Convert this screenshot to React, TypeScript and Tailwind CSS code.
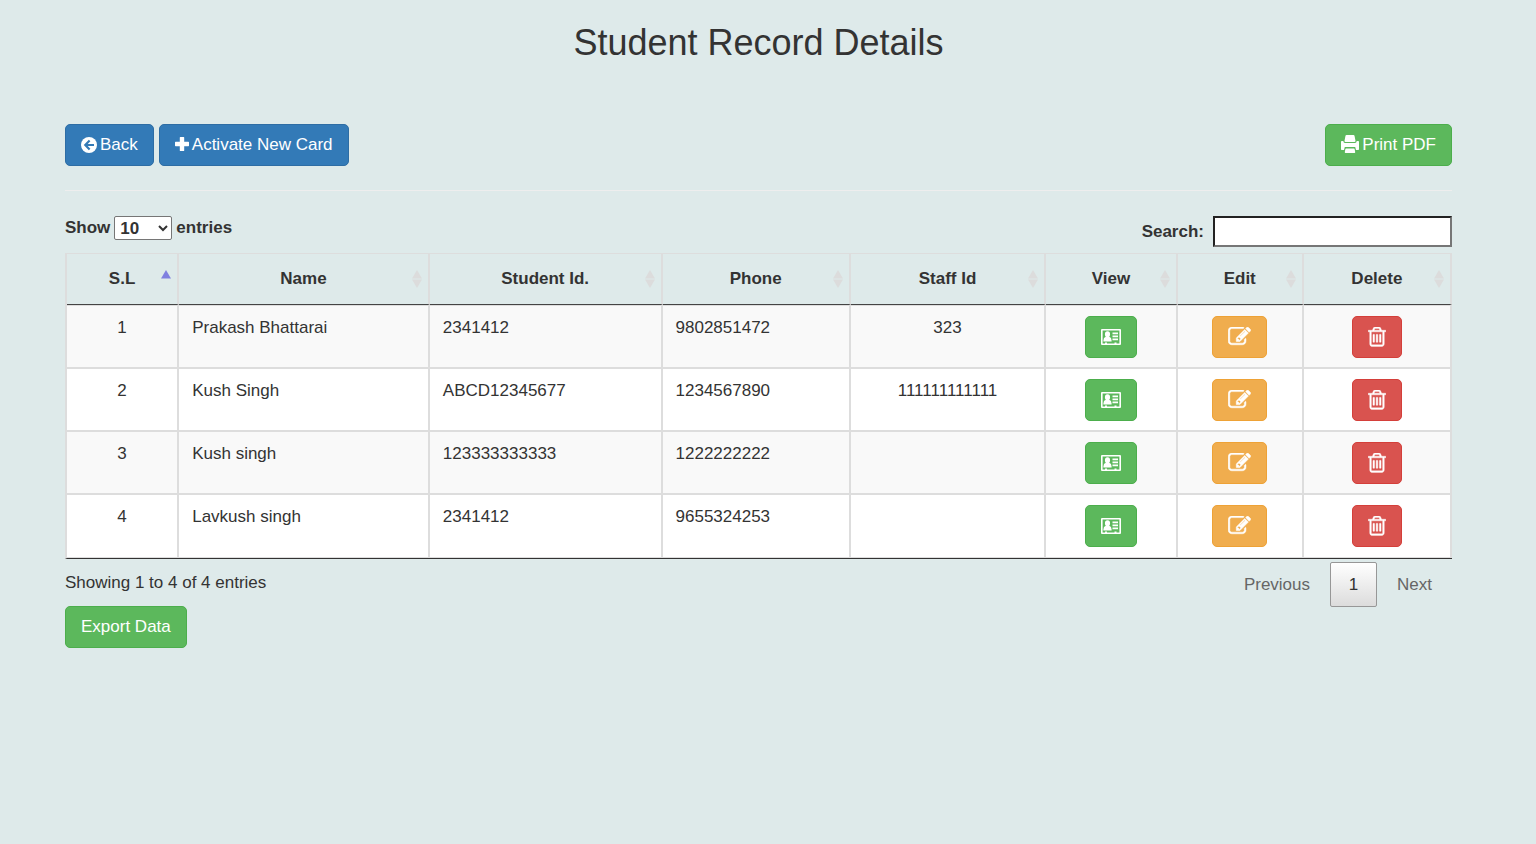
import { FC, ReactNode, SVGProps, useState } from 'react'

type Student = {
  name: string
  studentId: string
  phone: string
  staffId: string
}

const students: Student[] = [
  { name: 'Prakash Bhattarai', studentId: '2341412', phone: '9802851472', staffId: '323' },
  { name: 'Kush Singh', studentId: 'ABCD12345677', phone: '1234567890', staffId: '111111111111' },
  { name: 'Kush singh', studentId: '123333333333', phone: '1222222222', staffId: '' },
  { name: 'Lavkush singh', studentId: '2341412', phone: '9655324253', staffId: '' },
]

const columns = [
  { label: 'S.L', width: 'w-[8.1%]' },
  { label: 'Name', width: 'w-[18.1%]' },
  { label: 'Student Id.', width: 'w-[16.8%]' },
  { label: 'Phone', width: 'w-[13.6%]' },
  { label: 'Staff Id', width: 'w-[14.1%]' },
  { label: 'View', width: 'w-[9.5%]' },
  { label: 'Edit', width: 'w-[9.1%]' },
  { label: 'Delete', width: 'w-[10.7%]' },
]

const BackIcon: FC<SVGProps<SVGSVGElement>> = (props) => (
  <svg viewBox="0 0 16 16" aria-hidden="true" {...props}>
    <circle cx="8" cy="8" r="8" fill="currentColor" />
    <path d="M8.600 3.600L4.300 8l4.300 4.400M4.500 8h8.500" fill="none" stroke="#337ab7" strokeWidth="2.200" />
  </svg>
)

const PlusIcon: FC<SVGProps<SVGSVGElement>> = (props) => (
  <svg viewBox="0 0 14 16" fill="currentColor" aria-hidden="true" {...props}>
    <path d="M5.400 0h3.200q.6 0 .6.6v4.200h4.200q.6 0 .6.6v3.200q0 .6-.6.6H9.200v4.200q0 .6-.6.6H5.400q-.6 0-.6-.6V9.200H.6Q0 9.200 0 8.600V5.400q0-.6.6-.6h4.200V.6q0-.6.6-.6z" />
  </svg>
)

const PrintIcon: FC<SVGProps<SVGSVGElement>> = (props) => (
  <svg viewBox="0 0 18 21" fill="currentColor" aria-hidden="true" {...props}>
    <path d="M5.500 0h7q.8 0 1 .8l1 5q.1 1.200-1 1.200h-9q-1.100 0-1-1.200l1-5q.2-.8 1-.8z" />
    <path d="M.8 6h1.500q.2 2 1.700 2h10q1.500 0 1.700-2h1.500q.8 0 .8.800v7.400q0 .8-.8.800H15l-.8-3H3.800L3 15H.8q-.8 0-.8-.8V6.800Q0 6 .8 6z" />
    <path d="M5 13.500h8q.5 0 .6.500l.6 3q.1 1-.7 1h-9q-.8 0-.7-1l.6-3q.1-.5.6-.5z" />
  </svg>
)

const CardIcon: FC<SVGProps<SVGSVGElement>> = (props) => (
  <svg viewBox="0 0 20 17" fill="currentColor" aria-hidden="true" {...props}>
    <path
      fillRule="evenodd"
      d="M1 0h18q1 0 1 1v14q0 1-1 1H1q-1 0-1-1V1q0-1 1-1zm.600 1.600v12.800h2.400v-.9h2v.9h7.500v-.9h2v.9h2.900V1.600z"
    />
    <path d="M6.500 2.200q2.600 0 2.600 3 0 1.600-.9 2.600 2.400.8 2.400 3.700v1H2.400v-1q0-2.900 2.400-3.700-.9-1-.9-2.600 0-3 2.600-3zM11.500 3.500H17v1.700h-5.500zM11.500 6.500H17v1.700h-5.500zM11.500 9.500H17v1.700h-5.500z" />
  </svg>
)

const EditIcon: FC<SVGProps<SVGSVGElement>> = (props) => (
  <svg
    viewBox="0 128 1792 1664"
    fill="currentColor"
    stroke="currentColor"
    strokeWidth="40"
    aria-hidden="true"
    {...props}
  >
    <path d="M888 1184l116-116-152-152-116 116v56h96v96h56zm440-720q-16-16-33 1l-350 350q-17 17-1 33t33-1l350-350q17-17 1-33zm80 594v190q0 119-84.5 203.5t-203.5 84.5h-832q-119 0-203.5-84.5t-84.5-203.5v-832q0-119 84.5-203.5t203.5-84.5h832q63 0 117 25 15 7 18 23 3 17-9 29l-49 49q-14 14-32 8-23-6-45-6h-832q-66 0-113 47t-47 113v832q0 66 47 113t113 47h832q66 0 113-47t47-113v-126q0-13 9-22l64-64q15-15 35-7t20 29zm-96-738l288 288-672 672h-288v-288zm444 132l-92 92-288-288 92-92q28-28 68-28t68 28l152 152q28 28 28 68t-28 68z" />
  </svg>
)

const TrashIcon: FC<SVGProps<SVGSVGElement>> = (props) => (
  <svg
    viewBox="192 128 1408 1664"
    fill="currentColor"
    stroke="currentColor"
    strokeWidth="30"
    aria-hidden="true"
    {...props}
  >
    <path d="M704 736v576q0 14-9 23t-23 9h-64q-14 0-23-9t-9-23v-576q0-14 9-23t23-9h64q14 0 23 9t9 23zm256 0v576q0 14-9 23t-23 9h-64q-14 0-23-9t-9-23v-576q0-14 9-23t23-9h64q14 0 23 9t9 23zm256 0v576q0 14-9 23t-23 9h-64q-14 0-23-9t-9-23v-576q0-14 9-23t23-9h64q14 0 23 9t9 23zm128 724v-948h-896v948q0 22 7 40.5t14.5 27 10.5 8.5h832q3 0 10.5-8.5t14.5-27 7-40.5zm-672-1076h448l-48-117q-7-9-17-11h-317q-10 2-17 11zm928 32v64q0 14-9 23t-23 9h-96v948q0 83-47 143.5t-113 60.5h-832q-66 0-113-58.5t-47-141.5v-952h-96q-14 0-23-9t-9-23v-64q0-14 9-23t23-9h309l70-167q15-37 54-63t79-26h320q40 0 79 26t54 63l70 167h309q14 0 23 9t9 23z" />
  </svg>
)

const SortIcon: FC<{ active: boolean }> = ({ active }) => (
  <svg
    viewBox="0 0 10 18"
    className="absolute right-1.5 top-4 w-2.5 h-[18px]"
    aria-hidden="true"
  >
    <path d="M5 0l5 8.500H0z" fill={active ? '#8080e0' : '#dcdcdc'} />
    {!active && <path d="M0 9.500h10L5 18z" fill="#dcdcdc" />}
  </svg>
)

const tones = {
  primary: 'bg-[#337ab7] border-[#2e6da4]',
  success: 'bg-[#5cb85c] border-[#4cae4c]',
  warning: 'bg-[#f0ad4e] border-[#eea236]',
  danger: 'bg-[#d9534f] border-[#d43f3a]',
}

type ButtonProps = {
  tone: keyof typeof tones
  label?: string
  children: ReactNode
}

const Button: FC<ButtonProps> = ({ tone, label, children }) => (
  <button
    type="button"
    aria-label={label}
    className={`inline-flex items-center justify-center gap-[3px] h-[42px] px-[15px] rounded-[5px] border text-white align-top cursor-pointer ${tones[tone]}`}
  >
    {children}
  </button>
)

const StudentRow: FC<{ student: Student; index: number; last: boolean }> = ({
  student,
  index,
  last,
}) => {
  const cell = `border-r-2 border-[#ddd] pt-2.5 align-top leading-6 ${
    last ? 'border-b pb-2.5' : 'border-b-2 pb-[9px]'
  } ${index === 0 ? 'border-t' : ''}`

  return (
    <tr className={index % 2 === 0 ? 'bg-[#f9f9f9]' : 'bg-white'}>
      <td className={`${cell} text-center`}>{index + 1}</td>
      <td className={`${cell} px-[13px]`}>{student.name}</td>
      <td className={`${cell} px-[13px]`}>{student.studentId}</td>
      <td className={`${cell} px-[13px]`}>{student.phone}</td>
      <td className={`${cell} text-center`}>{student.staffId}</td>
      <td className={`${cell} text-center`}>
        <Button tone="success" label={`View ${student.name}`}>
          <CardIcon className="w-5 h-[17px]" />
        </Button>
      </td>
      <td className={`${cell} text-center`}>
        <Button tone="warning" label={`Edit ${student.name}`}>
          <EditIcon className="w-[23px] h-[21px]" />
        </Button>
      </td>
      <td className={`${cell} text-center`}>
        <Button tone="danger" label={`Delete ${student.name}`}>
          <TrashIcon className="w-[18px] h-[21px]" />
        </Button>
      </td>
    </tr>
  )
}

const App: FC = () => {
  const [search, setSearch] = useState('')
  const [pageSize, setPageSize] = useState('10')

  const rows = students.filter((student) =>
    Object.values(student).join(' ').toLowerCase().includes(search.toLowerCase())
  )

  return (
    <main className="min-h-screen bg-[#deeaea] pl-[65px] pr-[84px] pt-[22px] font-['Liberation_Sans',Arial,sans-serif] text-[17px] leading-[22px] text-[#333]">
      <h1 className="text-center text-[36px] leading-[42px]">Student Record Details</h1>

      <div className="flex justify-between mt-[60px] pb-6 border-b border-[#eee]">
        <div className="flex gap-[5px]">
          <Button tone="primary">
            <BackIcon className="w-4 h-4" />
            Back
          </Button>
          <Button tone="primary">
            <PlusIcon className="w-3.5 h-4" />
            Activate New Card
          </Button>
        </div>
        <Button tone="success">
          <PrintIcon className="w-[18px] h-[21px]" />
          Print PDF
        </Button>
      </div>

      <div className="flex justify-between items-start mt-[25px] font-bold">
        <label className="flex items-center gap-1">
          Show
          <select
            value={pageSize}
            onChange={(e) => setPageSize(e.target.value)}
            className="w-[58px] h-6 px-px bg-white border border-[#767676] rounded-[2px] font-bold"
          >
            <option>10</option>
            <option>25</option>
            <option>50</option>
            <option>100</option>
          </select>
          entries
        </label>
        <label className="flex items-center gap-[9px]">
          Search:
          <input
            type="search"
            value={search}
            onChange={(e) => setSearch(e.target.value)}
            className="w-[239px] h-[31px] px-1 bg-white border-2 border-t-[#222] border-l-[#222] border-r-[#767676] border-b-[#767676] font-normal"
          />
        </label>
      </div>

      <table className="w-full table-fixed border-separate border-spacing-0 mt-1.5 border-t border-t-[#ddd] border-l-2 border-l-[#ddd] border-b border-b-[#333]">
        <thead>
          <tr>
            {columns.map(({ label, width }, i) => (
              <th
                key={label}
                className={`relative h-[51px] border-r-2 border-r-[#ddd] border-b border-b-[#444] font-bold ${width}`}
              >
                {label}
                <SortIcon active={i === 0} />
              </th>
            ))}
          </tr>
        </thead>
        <tbody>
          {rows.map((student, i) => (
            <StudentRow
              key={student.phone}
              student={student}
              index={i}
              last={i === rows.length - 1}
            />
          ))}
        </tbody>
      </table>

      <div className="flex justify-between items-start">
        <div>
          <p className="mt-[13px] mb-3">
            Showing 1 to {rows.length} of {students.length} entries
          </p>
          <Button tone="success">Export Data</Button>
        </div>
        <nav className="flex items-center mt-[3px] text-[#666]">
          <button type="button" className="px-5">
            Previous
          </button>
          <button
            type="button"
            className="w-[47px] h-[45px] rounded-[2px] border border-[#979797] bg-linear-to-b from-white to-[#dcdcdc] text-[#333]"
          >
            1
          </button>
          <button type="button" className="px-5">
            Next
          </button>
        </nav>
      </div>
    </main>
  )
}

export default App
